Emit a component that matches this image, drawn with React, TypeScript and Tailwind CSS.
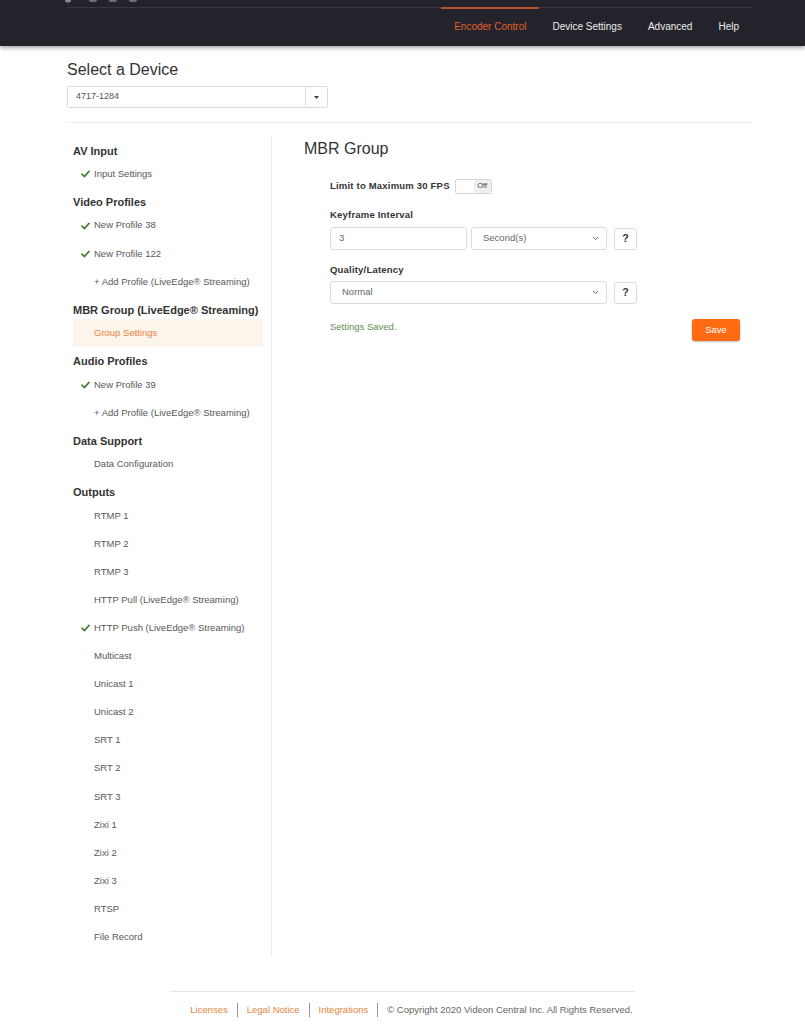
import { ChevronDown } from 'lucide-react';

const font = { fontFamily: '"Liberation Sans", Arial, sans-serif' };

type NavItem = { label: string; checked?: boolean; active?: boolean };
type NavSection = { title: string; items: NavItem[] };

const sections: NavSection[] = [
  { title: 'AV Input', items: [{ label: 'Input Settings', checked: true }] },
  {
    title: 'Video Profiles',
    items: [
      { label: 'New Profile 38', checked: true },
      { label: 'New Profile 122', checked: true },
      { label: '+ Add Profile (LiveEdge® Streaming)' },
    ],
  },
  {
    title: 'MBR Group (LiveEdge® Streaming)',
    items: [{ label: 'Group Settings', active: true }],
  },
  {
    title: 'Audio Profiles',
    items: [
      { label: 'New Profile 39', checked: true },
      { label: '+ Add Profile (LiveEdge® Streaming)' },
    ],
  },
  { title: 'Data Support', items: [{ label: 'Data Configuration' }] },
  {
    title: 'Outputs',
    items: [
      { label: 'RTMP 1' },
      { label: 'RTMP 2' },
      { label: 'RTMP 3' },
      { label: 'HTTP Pull (LiveEdge® Streaming)' },
      { label: 'HTTP Push (LiveEdge® Streaming)', checked: true },
      { label: 'Multicast' },
      { label: 'Unicast 1' },
      { label: 'Unicast 2' },
      { label: 'SRT 1' },
      { label: 'SRT 2' },
      { label: 'SRT 3' },
      { label: 'Zixi 1' },
      { label: 'Zixi 2' },
      { label: 'Zixi 3' },
      { label: 'RTSP' },
      { label: 'File Record' },
    ],
  },
];

const CheckMark = () => (
  <svg width="9" height="8" viewBox="0 0 9 8" className="shrink-0">
    <path d="M1 4.2 L3.4 6.6 L8 1.4" fill="none" stroke="#4f7f3c" strokeWidth="1.7" strokeLinecap="round" strokeLinejoin="round" />
  </svg>
);

// page content sits a little right of centre: 67px .. 752px
const Container = ({ children }: { children: React.ReactNode }) => (
  <div className="w-[699px] mx-auto pl-[14px]">{children}</div>
);

const Header = () => (
  <header className="bg-[#24232b] h-[46px] shadow-[0_2px_4px_rgba(0,0,0,0.35)] relative z-10">
    <Container>
      {/* logo is cut off at the top of the screenshot */}
      <div className="h-[8px] border-b border-[#38373f] flex items-start">
        <svg width="90" height="4" viewBox="0 0 90 4" className="-ml-[7px]">
          <ellipse cx="8" cy="0.5" rx="3" ry="2" fill="#8a8990" />
          <ellipse cx="33" cy="0.5" rx="4" ry="1.5" fill="#6f6e76" />
          <ellipse cx="53" cy="0.5" rx="4" ry="1.5" fill="#6f6e76" />
          <ellipse cx="73" cy="0.5" rx="4" ry="1.5" fill="#6f6e76" />
        </svg>
      </div>
      <nav className="flex justify-end text-[10px]">
        <a className="h-[37px] px-[13px] flex items-center text-[#e0612b] border-t-2 border-[#b8532a] -mt-px">Encoder Control</a>
        <a className="h-[37px] px-[13px] flex items-center text-[#ececec]">Device Settings</a>
        <a className="h-[37px] px-[13px] flex items-center text-[#ececec]">Advanced</a>
        <a className="h-[37px] px-[13px] flex items-center text-[#ececec]">Help</a>
      </nav>
    </Container>
  </header>
);

const Sidebar = () => (
  <aside className="w-[205px] shrink-0 border-r border-[#ececec] pl-[6px] pr-[8px] pt-[5px] pb-[5px]">
    {sections.map((s, i) => (
      <div key={s.title}>
        <div className={`h-[18px] flex items-center text-[11px] font-bold text-[#333] ${i > 0 ? 'mt-[5.4px]' : ''}`}>{s.title}</div>
        {s.items.map((it, j) => (
          <div
            key={j}
            className={`h-[28.1px] flex items-center pl-[8px] text-[9.5px] ${it.active ? 'bg-[#fdf4ec] text-[#e8853d]' : 'text-[#585858]'}`}
          >
            <span className="w-[13px] flex items-center">{it.checked && <CheckMark />}</span>
            <span>{it.label}</span>
          </div>
        ))}
      </div>
    ))}
  </aside>
);

const HelpButton = () => (
  <button className="w-[23px] h-[22px] border border-[#dcdcdc] rounded-[3px] bg-white text-[10.5px] font-bold text-[#333] flex items-center justify-center">?</button>
);

const MainPanel = () => (
  <main className="flex-1 pl-[32px] pr-[12px]">
    <h2 className="text-[16px] text-[#333] leading-[20px] mt-[2px]">MBR Group</h2>
    <div className="pl-[26px] mt-[19px]">
      <div className="flex items-center h-[16px]">
        <span className="text-[9.5px] font-bold text-[#333] tracking-[0.2px]">Limit to Maximum 30 FPS</span>
        <div className="ml-[5px] w-[37px] h-[15px] border border-[#d6d6d6] rounded-[2px] flex overflow-hidden">
          <span className="w-[18px] bg-white" />
          <span className="flex-1 bg-[#efefef] text-[7.5px] text-[#444] flex items-center justify-center">Off</span>
        </div>
      </div>

      <div className="mt-[15px] text-[9.5px] font-bold text-[#333] tracking-[0.2px] leading-[12px]">Keyframe Interval</div>
      <div className="mt-[6px] flex items-center">
        <div className="w-[137px] h-[23px] border border-[#dcdcdc] rounded-[3px] flex items-center px-[8px] text-[9.5px] text-[#666]">3</div>
        <div className="ml-[4px] w-[136px] h-[23px] border border-[#dcdcdc] rounded-[3px] flex items-center justify-between pl-[11px] pr-[6px] text-[9.5px] text-[#666]">
          <span>Second(s)</span>
          <ChevronDown size={9} strokeWidth={2.5} color="#555" />
        </div>
        <div className="ml-[7px]"><HelpButton /></div>
      </div>

      <div className="mt-[14px] text-[9.5px] font-bold text-[#333] tracking-[0.2px] leading-[12px]">Quality/Latency</div>
      <div className="mt-[5px] flex items-center">
        <div className="w-[277px] h-[23px] border border-[#dcdcdc] rounded-[3px] flex items-center justify-between pl-[11px] pr-[6px] text-[9.5px] text-[#666]">
          <span>Normal</span>
          <ChevronDown size={9} strokeWidth={2.5} color="#555" />
        </div>
        <div className="ml-[7px]"><HelpButton /></div>
      </div>

      <div className="mt-[17px] flex items-start justify-between">
        <span className="text-[9.5px] text-[#5e8d4f] leading-[12px]">Settings Saved.</span>
        <button className="mt-[-2px] w-[48px] h-[22px] rounded-[3px] bg-[#ff6b12] text-white text-[9.5px] shadow-[0_1px_2px_rgba(0,0,0,0.25)]">Save</button>
      </div>
    </div>
  </main>
);

const Footer = () => (
  <footer className="mt-[35px] pb-[10px]">
    <div className="w-[465px] h-px mx-auto bg-[#e4e4e4]" />
    <div className="mt-[11px] flex justify-center items-center text-[9.5px] pl-[18px]">
      <a className="text-[#e8853d]">Licenses</a>
      <span className="mx-[9px] w-px h-[14px] bg-[#999]" />
      <a className="text-[#e8853d]">Legal Notice</a>
      <span className="mx-[9px] w-px h-[14px] bg-[#999]" />
      <a className="text-[#e8853d]">Integrations</a>
      <span className="mx-[9px] w-px h-[14px] bg-[#999]" />
      <span className="text-[#666]">© Copyright 2020 Videon Central Inc. All Rights Reserved.</span>
    </div>
  </footer>
);

export default function App() {
  return (
    <div className="bg-white min-h-screen" style={font}>
      <Header />
      <Container>
        <h1 className="mt-[14px] text-[16px] leading-[20px] text-[#333]">Select a Device</h1>
        <div className="mt-[6px] w-[261px] h-[22px] border border-[#dcdcdc] rounded-[2px] flex">
          <span className="flex-1 flex items-center pl-[8px] text-[9px] text-[#555]">4717-1284</span>
          <span className="w-[22px] border-l border-[#dcdcdc] flex items-center justify-center">
            <svg width="5" height="3" viewBox="0 0 5 3"><path d="M0 0 L5 0 L2.5 3 Z" fill="#444" /></svg>
          </span>
        </div>
        <div className="mt-[14px] h-px bg-[#eeeeee]" />
        <div className="mt-[14px] flex">
          <Sidebar />
          <MainPanel />
        </div>
      </Container>
      <Footer />
    </div>
  );
}
